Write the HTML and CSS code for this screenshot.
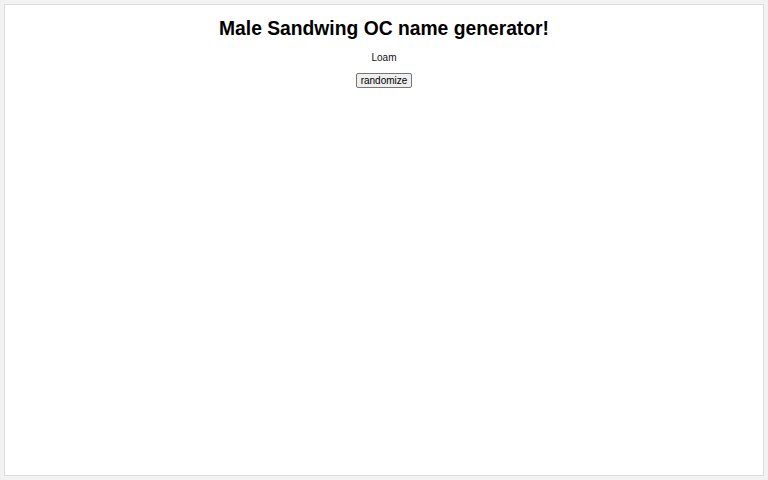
FILE: index.html
```html
<!DOCTYPE html>
<html lang="en">
<head>
    <meta charset="UTF-8">
    <meta name="viewport" content="width=device-width, initial-scale=1.0">
    <title>Male Sandwing OC name generator</title>
    <link rel="stylesheet" href="styles.css">
</head>
<body>
<div class="page">
    <h1>Male Sandwing OC name generator!</h1>

    <p class="name" id="name">Loam</p>

    <button class="randomize" id="randomize">randomize</button>
</div>
</body>
</html>
```

FILE: styles.css
```css
html, body {
    margin: 0;
    height: 100%;
}
body {
    background-color: #f2f2f2;
    padding: 4px 4px 4px 4px;
    box-sizing: border-box;
    font-family: "Liberation Sans", Arial, sans-serif;
}

.page {
    height: 472px;
    box-sizing: border-box;
    background-color: #fff;
    border: 1px solid #dcdcdc;
    text-align: center;
}

h1 {
    font-size: 19.3px;
    margin: 13px 0 0 0;
    color: #000;
}

.name {
    font-size: 10px;
    margin: 12px 0 0 0;
    color: #111;
}

.randomize {
    font-family: "Liberation Sans", Arial, sans-serif;
    font-size: 10px;
    margin-top: 10px;
    padding: 1px 4px;
    background-color: #efefef;
    border: 1px solid #767676;
    border-radius: 2px;
    color: #000;
}
```
